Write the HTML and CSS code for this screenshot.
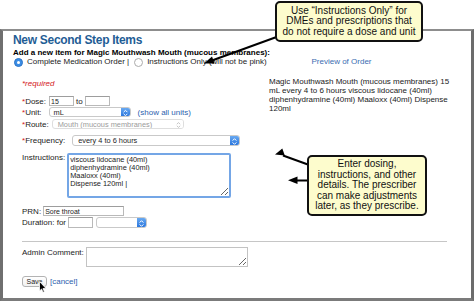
FILE: index.html
```html
<!DOCTYPE html>
<html lang="en">
<head>
<meta charset="utf-8">
<title>New Second Step Items</title>
<link rel="stylesheet" href="styles.css">
</head>
<body>
<div class="frame">
  <h1 class="title">New Second Step Items</h1>
  <div class="subtitle">Add a new item for Magic Mouthwash Mouth (mucous membranes):</div>
  <div class="columns">
    <div class="form">
      <div class="radios">
        <span class="radio checked"></span><span class="opt">Complete Medication Order |</span>
        <span class="radio second"></span><span class="opt">Instructions Only (will not be pink)</span>
      </div>
      <div class="required">*required</div>
      <div class="row dose-row">
        <span class="label"><span class="req">*</span>Dose:</span>
        <input class="field short" type="text" value="15">
        <span class="label">to</span>
        <input class="field short" type="text" value="">
      </div>
      <div class="row unit-row">
        <span class="label"><span class="req">*</span>Unit:</span>
        <div class="select unit-select"><span class="sel-text">mL</span><span class="stepper"><svg viewBox="0 0 9 10" width="9" height="10"><path d="M2.6 4.2 L4.5 2.3 L6.4 4.2 M2.6 5.8 L4.5 7.7 L6.4 5.8" stroke="#fff" fill="none" stroke-width="1"/></svg></span></div>
        <a class="link show-all">(show all units)</a>
      </div>
      <div class="row route-row">
        <span class="label"><span class="req">*</span>Route:</span>
        <div class="select route-select disabled"><span class="sel-text">Mouth (mucous membranes)</span><span class="stepper plain"><svg viewBox="0 0 9 10" width="9" height="10"><path d="M2.8 4.2 L4.5 2.6 L6.2 4.2 M2.8 5.8 L4.5 7.4 L6.2 5.8" stroke="#b9b9b9" fill="none" stroke-width="0.8"/></svg></span></div>
      </div>
      <div class="row freq-row">
        <span class="label"><span class="req">*</span>Frequency:</span>
        <div class="select freq-select"><span class="sel-text">every 4 to 6 hours</span><span class="stepper"><svg viewBox="0 0 9 11" width="9" height="11"><path d="M2.6 4.6 L4.5 2.7 L6.4 4.6 M2.6 6.4 L4.5 8.3 L6.4 6.4" stroke="#fff" fill="none" stroke-width="1"/></svg></span></div>
      </div>
      <div class="row top-row instr-row">
        <span class="label">Instructions:</span>
        <textarea class="area instructions">viscous lidocane (40ml)
diphenhydramine (40ml)
Maaloxx (40ml)
Dispense 120ml |</textarea>
      </div>
      <div class="row prn-row">
        <span class="label">PRN:</span>
        <input class="field prn" type="text" value="Sore throat">
      </div>
      <div class="row dur-row">
        <span class="label">Duration: for</span>
        <input class="field short tall" type="text" value="">
        <div class="select dur-select"><span class="sel-text"></span><span class="stepper"><svg viewBox="0 0 9 11" width="9" height="11"><path d="M2.6 4.6 L4.5 2.7 L6.4 4.6 M2.6 6.4 L4.5 8.3 L6.4 6.4" stroke="#fff" fill="none" stroke-width="1"/></svg></span></div>
      </div>
    </div>
    <div class="preview">
      <div class="preview-title">Preview of Order</div>
      <p class="preview-text">Magic Mouthwash Mouth (mucous membranes) 15 mL every 4 to 6 hours viscous lidocane (40ml) diphenhydramine (40ml) Maaloxx (40ml) Dispense 120ml</p>
    </div>
  </div>
  <div class="bottom">
    <hr class="rule">
    <div class="row top-row admin-row">
      <span class="label">Admin Comment:</span>
      <textarea class="area admin"></textarea>
    </div>
    <div class="row save-row">
      <button class="save" type="button">Save</button>
      <a class="link">[cancel]</a>
    </div>
  </div>
</div>

<svg class="arrows" viewBox="0 0 474 301" width="474" height="301">
  <line x1="282" y1="35" x2="212" y2="60.5" stroke="#000" stroke-width="2"/>
  <polygon points="204,63.5 214.6,63.6 212,56.4" fill="#000"/>
  <line x1="312" y1="166" x2="283" y2="155.5" stroke="#000" stroke-width="2"/>
  <polygon points="275,154.5 284.8,155.6 282.3,148.6" fill="#000"/>
  <line x1="312" y1="180.6" x2="296" y2="180.4" stroke="#000" stroke-width="2"/>
  <polygon points="288,180.3 297.5,176.6 297.5,184" fill="#000"/>
  <path class="cursor" d="M39.5 281.5 L39.5 291 L41.6 289 L43 292.3 L44.4 291.7 L43 288.5 L46 288.4 Z" fill="#000" stroke="#fff" stroke-width="0.8"/>
</svg>

<div class="callout callout-top">Use “Instructions Only” for<br>DMEs and prescriptions that<br>do not require a dose and unit</div>
<div class="callout callout-side">Enter dosing,<br>instructions, and other<br>details. The prescriber<br>can make adjustments<br>later, as they prescribe.</div>
</body>
</html>
```
FILE: styles.css
```css
* { box-sizing: border-box; }
html, body { margin: 0; padding: 0; background: #fff; }
body {
  font-family: "Liberation Sans", Arial, Helvetica, sans-serif;
  font-size: 8px;
  line-height: 9px;
  color: #1b1b1b;
  width: 474px;
  height: 301px;
  overflow: hidden;
  position: relative;
}
.frame {
  margin-top: 29px;
  height: 272px;
  border-top: 2px solid #8d8d8d;
  border-left: 3px solid #6f6f6f;
  border-right: 3px solid #6c6c6c;
  border-bottom: 3px solid #7b7b7b;
  padding-top: 3px;
}
.title {
  margin: 0 0 0 10px;
  font-size: 12px;
  line-height: 13px;
  letter-spacing: -0.3px;
  font-weight: bold;
  color: #1f5d95;
}
.subtitle {
  margin: 1px 0 0 10px;
  font-weight: bold;
  color: #000;
}
.columns { display: flex; }
.form { width: 252px; padding-left: 19px; }
.radios {
  display: flex;
  align-items: center;
  height: 10px;
  line-height: 10px;
  margin-left: -8px;
}
.radio {
  width: 9px;
  height: 9px;
  border-radius: 50%;
  border: 1px solid #ababab;
  background: #fff;
  position: relative;
  flex: none;
}
.radio.checked {
  background: #3b8de5;
  border-color: #2c74c6;
}
.radio.checked::after {
  content: "";
  position: absolute;
  left: 2px;
  top: 2px;
  width: 3px;
  height: 3px;
  border-radius: 50%;
  background: #fff;
}
.radio.second { margin-left: 5px; }
.opt { margin-left: 4px; white-space: nowrap; }
.required {
  margin-top: 12px;
  color: #d4171d;
  font-style: italic;
}
.req { color: #d4171d; }
.row {
  display: flex;
  align-items: center;
  gap: 2px;
  white-space: nowrap;
}
.top-row { align-items: flex-start; }
.dose-row { margin-top: 8px; height: 10px; }
.unit-row { margin-top: 1px; height: 10px; }
.route-row { margin-top: 2px; height: 10px; }
.freq-row { margin-top: 6px; height: 11px; }
.instr-row { margin-top: 7px; }
.prn-row { margin-top: 8px; height: 10px; }
.dur-row { margin-top: 1px; height: 11px; }
.field {
  height: 10px;
  border: 1px solid #b9b9b9;
  border-top-color: #9d9d9d;
  background: #fff;
  padding: 0 1px;
  font-family: "Liberation Sans", Arial, sans-serif;
  font-size: 7px;
  color: #222;
  margin: 0;
  outline: none;
}
.field.short { width: 25px; }
.field.tall { height: 11px; }
.field.prn { width: 81px; }
.dose-row .field:first-of-type { margin-left: 1px; }
.select {
  display: flex;
  align-items: center;
  height: 10px;
  border: 1px solid #c9c9c9;
  border-radius: 3px;
  background: #fff;
  font-size: 7.4px;
  color: #1e1e1e;
  overflow: hidden;
}
.sel-text { padding-left: 4px; flex: 1; }
.stepper {
  flex: none;
  width: 9px;
  height: 100%;
  display: flex;
  background: linear-gradient(#69a9f1, #2b77de);
}
.stepper.plain { background: #fff; }
.stepper svg { display: block; }
.unit-select { width: 82px; margin-left: 5px; }
.route-select { width: 132px; margin-left: 1px; }
.route-select .sel-text { padding-left: 5px; color: #9b9b9b; }
.route-select { border-color: #dedede; }
.freq-select { width: 168px; height: 11px; margin-left: 5px; }
.freq-select .sel-text { padding-left: 5px; }
.dur-select { width: 51px; height: 11px; margin-left: 1px; }
.link { color: #2d62ae; cursor: pointer; }
.show-all { margin-left: 5px; }
.area {
  margin: 0;
  resize: both;
  font-family: "Liberation Sans", Arial, sans-serif;
  outline: none;
  background: #fff;
}
.instructions {
  width: 164px;
  height: 45px;
  border: 2px solid #74a6e6;
  border-radius: 2px;
  padding: 1px 1px;
  font-size: 7.4px;
  line-height: 8px;
  color: #1b1b1b;
  overflow: hidden;
}
.preview { flex: 1; }
.preview-title {
  width: 173px;
  text-align: center;
  line-height: 10px;
  color: #3a6db1;
}
.preview-text {
  margin: 10px 0 0 14px;
  width: 188px;
  line-height: 9.1px;
  color: #1b1b1b;
}
.bottom { padding-left: 19px; }
.rule {
  margin: 13px 0 0 0;
  width: 425px;
  height: 0;
  border: 0;
  border-top: 1px solid #c6c6c6;
}
.admin-row { margin-top: 5px; }
.admin-row .label { margin-top: 1px; }
.admin {
  width: 162px;
  height: 20px;
  border: 1px solid #c3c3c3;
  padding: 0;
}
.save-row { margin-top: 9px; height: 11px; gap: 3px; }
.save {
  width: 25px;
  height: 11px;
  margin: 0;
  padding: 0;
  border: 1px solid #b3b3b3;
  border-radius: 3px;
  background: linear-gradient(#ffffff, #f1f1f1);
  font-family: "Liberation Sans", Arial, sans-serif;
  font-size: 7px;
  line-height: 9px;
  color: #1b1b1b;
}
.arrows {
  position: absolute;
  left: 0;
  top: 0;
  pointer-events: none;
}
.callout {
  position: absolute;
  background: #fdfccd;
  border: 2px solid #111;
  border-radius: 5px;
  text-align: center;
  font-size: 10px;
  line-height: 10.5px;
  color: #111;
  display: flex;
  align-items: center;
  justify-content: center;
}
.callout-top { left: 275px; top: 1px; width: 148px; height: 41px; }
.callout-side { left: 307px; top: 155px; width: 120px; height: 61px; }
```
